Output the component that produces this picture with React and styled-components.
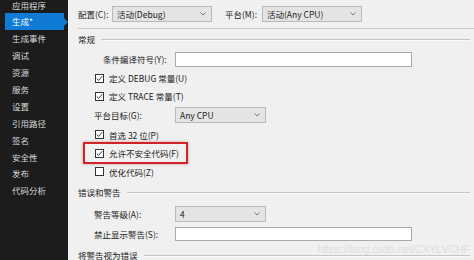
import React from "react"
import styled, { createGlobalStyle } from "styled-components"

const GlobalStyle = createGlobalStyle`
  html, body {
    margin: 0;
    padding: 0;
    background: #f0f0f0;
  }
  body {
    font-family: "Noto Sans CJK SC", "Noto Sans", sans-serif;
    font-size: 8.5px;
    color: #222222;
  }
`

const Window = styled.div`
  display: flex;
  width: 474px;
  height: 260px;
  overflow: hidden;
  position: relative;
`

const Sidebar = styled.nav`
  width: 68px;
  flex-shrink: 0;
  background: #1c1c1d;
`

const NavList = styled.div`
  margin-top: -3.5px;
  display: flex;
  flex-direction: column;
`

const NavItem = styled.div`
  position: relative;
  height: 16.9px;
  line-height: 16.9px;
  margin-left: 5px;
  margin-right: 4px;
  padding-left: 7px;
  color: ${({ $active }) => ($active ? "#ffffff" : "#d8d8d8")};
  background: ${({ $active }) => ($active ? "#0f7bd4" : "transparent")};

  &::after {
    content: "";
    display: ${({ $active }) => ($active ? "block" : "none")};
    position: absolute;
    right: -4px;
    top: 50%;
    margin-top: -4px;
    border-style: solid;
    border-width: 4px 0 4px 4px;
    border-color: transparent transparent transparent #0f7bd4;
  }
`

const Main = styled.main`
  flex: 1;
  padding-left: 10px;
  padding-right: 4px;
`

const TopBar = styled.div`
  height: 28px;
  display: flex;
  align-items: center;
  border-bottom: 1px solid #c9c9c9;
  margin-right: -4px;
`

const TopLabel = styled.span`
  width: ${({ $w }) => $w}px;
  flex-shrink: 0;
  white-space: nowrap;
`

const Select = styled.div`
  width: ${({ $w }) => $w}px;
  height: 16px;
  box-sizing: border-box;
  border: 1px solid #b9b9b9;
  background: #e4e4e4;
  display: flex;
  align-items: center;
  justify-content: space-between;
  padding: 0 5px 0 4px;
  margin-right: ${({ $mr }) => $mr || 0}px;
  flex-shrink: 0;
`

const Chevron = () => (
  <svg width="6" height="4" viewBox="0 0 6 4">
    <path d="M0.5 0.5 L3 3 L5.5 0.5" fill="none" stroke="#6a6a6a" strokeWidth="0.9" />
  </svg>
)

const Section = styled.div`
  height: ${({ $h }) => $h}px;
  display: flex;
  align-items: center;
  gap: 6px;
  white-space: nowrap;

  &::after {
    content: "";
    flex: 1;
    height: 1px;
    background: #c6c6c6;
    box-shadow: 0 1px 0 #fafafa;
  }
`

const Row = styled.div`
  height: ${({ $h }) => $h}px;
  display: flex;
  align-items: center;
  padding-left: 16px;
  white-space: nowrap;
  position: relative;
`

const FieldLabel = styled.span`
  width: 81px;
  flex-shrink: 0;
  box-sizing: border-box;
  padding-left: ${({ $indent }) => $indent || 0}px;
`

const TextInput = styled.div`
  width: 237px;
  height: ${({ $h }) => $h || 15}px;
  box-sizing: border-box;
  border: 1px solid #a9a9a9;
  background: #ffffff;
`

const Box = styled.span`
  width: 9px;
  height: 9px;
  box-sizing: border-box;
  border: 1px solid #333333;
  background: #ffffff;
  display: inline-flex;
  align-items: center;
  justify-content: center;
  margin-left: 1px;
  margin-right: 5px;
  flex-shrink: 0;
`

const Highlight = styled.div`
  position: absolute;
  left: 5px;
  top: -2px;
  width: 105px;
  height: 22px;
  box-sizing: border-box;
  border: 2px solid #d2232a;
  box-shadow: 0 0 3px rgba(120, 0, 0, 0.35);
  pointer-events: none;
`

const Watermark = styled.div`
  position: absolute;
  right: 4px;
  bottom: 5px;
  font-family: "Liberation Sans", "Noto Sans", sans-serif;
  font-size: 10.5px;
  color: #dedede;
`

const Check = () => (
  <svg width="7" height="7" viewBox="0 0 7 7">
    <path d="M0.8 3.6 L2.7 5.4 L6.2 1.2" fill="none" stroke="#222" strokeWidth="0.9" />
  </svg>
)

const CheckRow = ({ checked, h, children, highlight }) => (
  <Row $h={h}>
    {highlight && <Highlight />}
    <Box>{checked && <Check />}</Box>
    <span>{children}</span>
  </Row>
)

const navItems = [
  "应用程序",
  "生成*",
  "生成事件",
  "调试",
  "资源",
  "服务",
  "设置",
  "引用路径",
  "签名",
  "安全性",
  "发布",
  "代码分析",
]

const App = () => (
  <>
    <GlobalStyle />
    <Window>
      <Sidebar>
        <NavList>
          {navItems.map((item) => (
            <NavItem key={item} $active={item === "生成*"}>
              {item}
            </NavItem>
          ))}
        </NavList>
      </Sidebar>

      <Main>
        <TopBar>
          <TopLabel $w={34}>配置(C):</TopLabel>
          <Select $w={100} $mr={13}>
            <span>活动(Debug)</span>
            <Chevron />
          </Select>
          <TopLabel $w={37}>平台(M):</TopLabel>
          <Select $w={100}>
            <span>活动(Any CPU)</span>
            <Chevron />
          </Select>
        </TopBar>

        <Section $h={20}>常规</Section>
        <Row $h={20}>
          <FieldLabel $indent={9}>条件编译符号(Y):</FieldLabel>
          <TextInput />
        </Row>
        <CheckRow h={18} checked>定义 DEBUG 常量(U)</CheckRow>
        <CheckRow h={18} checked>定义 TRACE 常量(T)</CheckRow>
        <Row $h={20}>
          <FieldLabel>平台目标(G):</FieldLabel>
          <Select $w={91}>
            <span>Any CPU</span>
            <Chevron />
          </Select>
        </Row>
        <CheckRow h={19} checked>首选 32 位(P)</CheckRow>
        <CheckRow h={18} checked highlight>允许不安全代码(F)</CheckRow>
        <CheckRow h={19}>优化代码(Z)</CheckRow>

        <Section $h={22}>错误和警告</Section>
        <Row $h={21}>
          <FieldLabel>警告等级(A):</FieldLabel>
          <Select $w={91}>
            <span>4</span>
            <Chevron />
          </Select>
        </Row>
        <Row $h={20}>
          <FieldLabel>禁止显示警告(S):</FieldLabel>
          <TextInput $h={14} />
        </Row>
        <Section $h={22}>将警告视为错误</Section>
      </Main>

      <Watermark>https://blog.csdn.net/CXYLVCHF</Watermark>
    </Window>
  </>
)

export default App
